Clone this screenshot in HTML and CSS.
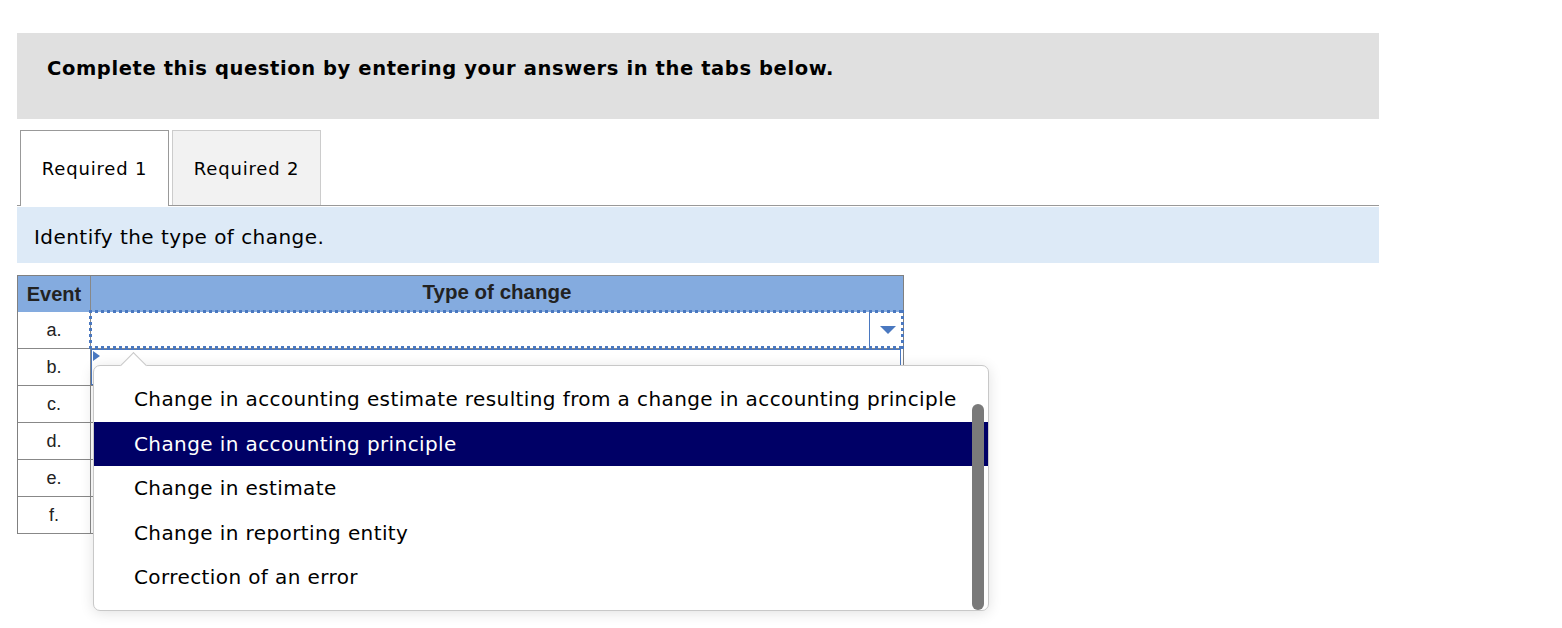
FILE: index.html
```html
<!DOCTYPE html>
<html>
<head>
<meta charset="utf-8">
<link rel="stylesheet" href="styles.css">
</head>
<body>
<div class="page">
  <div class="banner">Complete this question by entering your answers in the tabs below.</div>
  <div class="tabs">
    <div class="tab active">Required 1</div>
    <div class="tab">Required 2</div>
  </div>
  <div class="instr">Identify the type of change.</div>
  <div class="grid">
    <div class="row head">
      <div class="ev">Event</div>
      <div class="ty">Type of change</div>
    </div>
    <div class="row">
      <div class="ev">a.</div>
      <div class="ty focus">
        <div class="arrowbox"><span class="tri"></span></div>
      </div>
    </div>
    <div class="row">
      <div class="ev">b.</div>
      <div class="ty sel"><span class="flag"></span></div>
    </div>
    <div class="row"><div class="ev">c.</div><div class="ty"></div></div>
    <div class="row"><div class="ev">d.</div><div class="ty"></div></div>
    <div class="row"><div class="ev">e.</div><div class="ty"></div></div>
    <div class="row last"><div class="ev">f.</div><div class="ty"></div></div>
  </div>

  <div class="popup">
    <span class="notch"></span>
    <ul class="opts">
      <li>Change in accounting estimate resulting from a change in accounting principle</li>
      <li class="hl">Change in accounting principle</li>
      <li>Change in estimate</li>
      <li>Change in reporting entity</li>
      <li>Correction of an error</li>
    </ul>
    <span class="thumb"></span>
  </div>
</div>
</body>
</html>
```
FILE: styles.css
```css
html, body { margin: 0; padding: 0; background: #fff; }
.page {
  position: relative;
  width: 1562px;
  height: 628px;
  padding: 33px 0 0 17px;
  box-sizing: border-box;
  font-family: "DejaVu Sans", Verdana, sans-serif;
  color: #000;
}
.banner {
  width: 1362px;
  height: 86px;
  box-sizing: border-box;
  background: #e0e0e0;
  padding: 25px 0 0 30px;
  font-weight: bold;
  font-size: 19.5px;
  letter-spacing: 0.6px;
  line-height: 22px;
}
.tabs {
  margin-top: 11px;
  width: 1362px;
  height: 76px;
  box-sizing: border-box;
  border-bottom: 1px solid #999;
  display: flex;
  align-items: flex-end;
  padding-left: 3px;
  gap: 3px;
}
.tab {
  width: 149px;
  height: 75px;
  box-sizing: border-box;
  border: 1px solid #ccc;
  border-bottom: none;
  background: #f2f2f2;
  display: flex;
  align-items: center;
  justify-content: center;
  font-size: 18px;
  letter-spacing: 0.8px;
}
.tab.active {
  background: #fff;
  border-color: #999;
  height: 76px;
  margin-bottom: -1px;
}
.instr {
  margin-top: 1px;
  width: 1362px;
  height: 56px;
  box-sizing: border-box;
  background: #ddeaf7;
  padding: 3px 0 0 17px;
  display: flex;
  align-items: center;
  font-size: 20px;
  letter-spacing: 0.45px;
}
.grid {
  margin-top: 12px;
  width: 887px;
  border-left: 1px solid #808080;
  border-right: 1px solid #808080;
  border-top: 1px solid #808080;
  box-sizing: border-box;
  font-family: "Liberation Sans", Arial, sans-serif;
}
.row {
  display: grid;
  grid-template-columns: 73px 1fr;
  height: 37px;
  border-bottom: 1px solid #888;
  box-sizing: border-box;
}
.row.head {
  height: 36px;
  background: #84abdf;
  border-bottom: none;
}
.row .ev {
  border-right: 1px solid #888;
  display: flex;
  align-items: center;
  justify-content: center;
  font-size: 18px;
  color: #222;
}
.row.head .ev, .row.head .ty {
  font-weight: bold;
  font-size: 20px;
  color: #222;
}
.row.head .ty {
  display: flex;
  align-items: center;
  justify-content: center;
  padding-bottom: 4px;
  box-sizing: border-box;
  font-size: 20.5px;
}
.ty { position: relative; }
.focus::after {
  content: "";
  position: absolute;
  left: -2px; right: -1px; top: -2px; bottom: -1px;
  background:
    repeating-linear-gradient(90deg, #4a78c0 0 3px, transparent 3px 6px) top left / 100% 3px no-repeat,
    repeating-linear-gradient(90deg, #4a78c0 0 3px, transparent 3px 6px) bottom left / 100% 3px no-repeat,
    repeating-linear-gradient(180deg, #4a78c0 0 3px, transparent 3px 6px) top left / 3px 100% no-repeat,
    repeating-linear-gradient(180deg, #4a78c0 0 3px, transparent 3px 6px) top right / 3px 100% no-repeat;
}
.arrowbox {
  position: absolute;
  right: 0; top: 0; bottom: 0;
  width: 33px;
  border-left: 1px solid #4a78c0;
  display: flex;
  align-items: center;
  justify-content: center;
}
.tri {
  width: 0; height: 0;
  border-left: 8px solid transparent;
  border-right: 8px solid transparent;
  border-top: 8px solid #4a78c0;
  margin-left: 2px;
}
.sel {
  box-shadow: inset 0 0 0 1px #4a78c0;
  margin-right: 2px;
}
.flag {
  position: absolute;
  left: 2px; top: 2px;
  width: 0; height: 0;
  border-top: 5px solid transparent;
  border-bottom: 5px solid transparent;
  border-left: 7px solid #4a78c0;
}
.popup {
  position: absolute;
  left: 93px;
  top: 365px;
  width: 896px;
  height: 246px;
  box-sizing: border-box;
  background: #fff;
  border: 1px solid #c8c8c8;
  border-radius: 7px;
  box-shadow: 0 2px 14px rgba(0,0,0,0.12);
}
.notch {
  position: absolute;
  left: 30px;
  top: -10px;
  width: 18px;
  height: 18px;
  background: #fff;
  border-left: 1px solid #c8c8c8;
  border-top: 1px solid #c8c8c8;
  transform: rotate(45deg);
}
.opts {
  position: relative;
  list-style: none;
  margin: 0;
  padding: 11px 0 0 0;
  font-family: "DejaVu Sans", Verdana, sans-serif;
  font-size: 20px;
  letter-spacing: 0.4px;
}
.opts li {
  height: 44.5px;
  line-height: 44px;
  padding-left: 40px;
  white-space: nowrap;
}
.opts li.hl {
  background: #000066;
  color: #fff;
}
.thumb {
  position: absolute;
  right: 4px;
  top: 38px;
  width: 12px;
  height: 206px;
  border-radius: 6px;
  background: #7a7a7a;
}
```
